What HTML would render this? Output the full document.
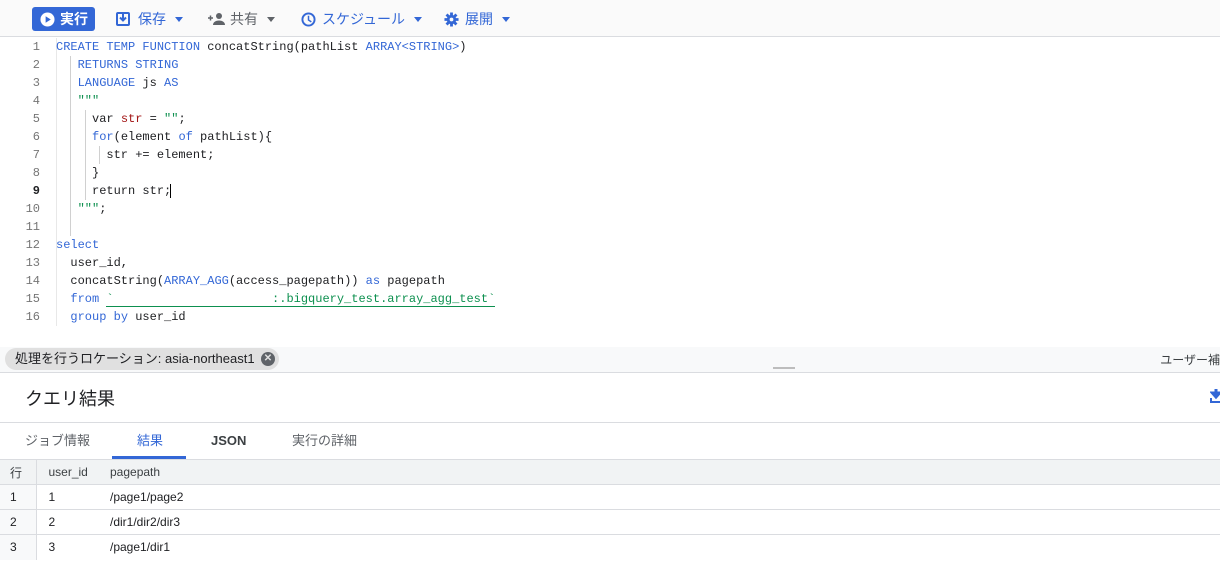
<!DOCTYPE html>
<html><head><meta charset="utf-8"><style>
*{margin:0;padding:0;box-sizing:border-box}
body{width:1220px;height:565px;overflow:hidden;background:#fff;font-family:"Liberation Sans","Noto Sans CJK JP",sans-serif;color:#202124;position:relative}
.tb{position:absolute;top:0;left:0;width:1220px;height:37px;background:#fafafa;border-bottom:1px solid #dadce0}
.btn{position:absolute;top:7px;height:24px;display:flex;align-items:center;font-size:14px;line-height:24px;color:#3c4043}
.run{left:32px;width:63px;background:#3367d6;color:#fff;border-radius:3px;padding-left:8px;font-weight:bold}
.tri{display:inline-block;width:0;height:0;border-left:4.5px solid transparent;border-right:4.5px solid transparent;border-top:5px solid #3c4043;margin-left:9px}
.ed{position:absolute;top:38px;left:0;width:1220px;height:308px;font-family:"Liberation Mono",monospace;font-size:12px}
.ln{position:absolute;left:0;width:40px;text-align:right;color:#757575;line-height:18px}
.cd{position:absolute;left:56px;white-space:pre;color:#202124;line-height:18px}
.k{color:#3367d6}.s{color:#0d904f}.v{color:#a31515}
.g{position:absolute;width:1px;background:#d0d0d0}
.loc{position:absolute;top:347px;left:0;width:1220px;height:26px;background:#f8f9fa;border-bottom:1px solid #dadce0}
.chip{position:absolute;left:5px;top:1px;height:22px;background:#e0e0e0;border-radius:11px;font-size:13px;padding:0 0 0 10px;line-height:22px;width:274px}
.x{position:absolute;right:4px;top:4px;width:14px;height:14px;border-radius:50%;background:#5f6368;color:#e0e0e0;font-size:10px;line-height:14px;text-align:center;font-weight:bold}
.tabs{position:absolute;top:422px;left:0;width:1220px;height:37px;border-top:1px solid #dadce0;font-size:13px;color:#5f6368}
.tab{position:absolute;top:9px;line-height:18px}
table{position:absolute;top:459px;left:0;width:1220px;border-collapse:collapse;font-size:12px}
td{height:25px;border-top:1px solid #dadce0;padding-left:12px}
tr.h td{background:#f1f3f4;color:#3c4043}
td.n{width:36px;padding-left:10px;border-right:1px solid #dadce0;background:#f8f9fa}
</style></head><body>
<div class="tb">
<div class="btn run"><svg width="15" height="15" viewBox="0 0 16 16"><circle cx="8" cy="8" r="7.5" fill="#fff"/><path d="M6 4.5v7l5.5-3.5z" fill="#3367d6"/></svg><span style="margin-left:5px">実行</span></div>
<div class="btn" style="left:116px"><svg width="14" height="14" viewBox="0 0 14 14"><rect x="1" y="1" width="12" height="12" rx="1" fill="none" stroke="#3367d6" stroke-width="2"/><path d="M7 2v6M4 5.5l3 3 3-3" stroke="#3367d6" stroke-width="2" fill="none"/></svg><span style="margin-left:8px;color:#3367d6">保存</span><span class="tri" style="border-top-color:#3367d6"></span></div>
<div class="btn" style="left:208px;color:#5f6368"><svg width="18" height="14" viewBox="0 0 18 14"><path d="M0 6h5M2.5 3.5v5" stroke="#5f6368" stroke-width="1.5"/><circle cx="11" cy="4" r="3" fill="#5f6368"/><path d="M5 13c0-3 3-4.5 6-4.5s6 1.5 6 4.5z" fill="#5f6368"/></svg><span style="margin-left:4px">共有</span><span class="tri" style="border-top-color:#5f6368"></span></div>
<div class="btn" style="left:301px;color:#3367d6"><svg width="15" height="15" viewBox="0 0 16 16"><circle cx="8" cy="8" r="6.5" fill="none" stroke="#3367d6" stroke-width="2"/><path d="M8 4v4.5l3 2" stroke="#3367d6" stroke-width="1.6" fill="none"/></svg><span style="margin-left:6px">スケジュール</span><span class="tri" style="border-top-color:#3367d6"></span></div>
<div class="btn" style="left:444px;color:#3367d6"><svg width="15" height="15" viewBox="0 0 16 16"><circle cx="8" cy="8" r="5" fill="#3367d6"/><g stroke="#3367d6" stroke-width="3"><path d="M8 0.5v15M0.5 8h15M2.7 2.7l10.6 10.6M13.3 2.7L2.7 13.3"/></g><circle cx="8" cy="8" r="2" fill="#fafafa"/></svg><span style="margin-left:6px">展開</span><span class="tri" style="border-top-color:#3367d6"></span></div>
</div>
<div class="ed">
<div class="g" style="left:70px;top:18px;height:180px"></div>
<div class="g" style="left:85px;top:72px;height:90px"></div>
<div class="g" style="left:99px;top:108px;height:18px"></div>
<div class="g" style="left:56px;top:0;height:288px;background:#e8e8e8"></div>
</div>
<div class="ed" id="code"></div>
<script>
var L=[
'<span class="k">CREATE TEMP FUNCTION</span> concatString(pathList <span class="k">ARRAY&lt;STRING&gt;</span>)',
'   <span class="k">RETURNS STRING</span>',
'   <span class="k">LANGUAGE</span> js <span class="k">AS</span>',
'   <span class="s">"""</span>',
'     var <span class="v">str</span> = <span class="s">""</span>;',
'     <span class="k">for</span>(element <span class="k">of</span> pathList){',
'       str += element;',
'     }',
'     return str;<span style="border-left:1.5px solid #000;margin-left:-1px">&#8203;</span>',
'   <span class="s">"""</span>;',
'',
'<span class="k">select</span>',
'  user_id,',
'  concatString(<span class="k">ARRAY_AGG</span>(access_pagepath)) <span class="k">as</span> pagepath',
'  <span class="k">from</span> <span class="s" style="border-bottom:1px solid #0d904f">`                      :.bigquery_test.array_agg_test`</span>',
'  <span class="k">group by</span> user_id'];
var h='';for(var i=0;i<L.length;i++){var t=i*18;h+='<div class="ln" style="top:'+t+'px;'+(i==8?'color:#202124;font-weight:bold':'')+'">'+(i+1)+'</div><div class="cd" style="top:'+t+'px">'+L[i]+'</div>';}
document.getElementById('code').innerHTML=h;
</script>
<div class="loc"><div class="chip">処理を行うロケーション: asia-northeast1<div class="x">✕</div></div>
<div style="position:absolute;right:0;top:4px;font-size:12px;color:#3c4043">ユーザー補</div>
<div style="position:absolute;left:773px;top:20px;width:22px;height:2px;background:#bdbdbd"></div></div>
<div style="position:absolute;top:385px;left:25px;font-size:18px">クエリ結果</div>
<svg style="position:absolute;left:1210px;top:389px" width="12" height="14" viewBox="0 0 12 14"><path d="M6 0v7M2.5 4l3.5 4 3.5-4z" stroke="#3367d6" stroke-width="3" fill="#3367d6"/><path d="M1 9v4h11" stroke="#3367d6" stroke-width="2" fill="none"/></svg>
<div class="tabs">
<div class="tab" style="left:25px">ジョブ情報</div>
<div class="tab" style="left:137px;color:#3367d6">結果</div>
<div class="tab" style="left:211px;font-weight:bold;color:#3c4043">JSON</div>
<div class="tab" style="left:292px">実行の詳細</div>
<div style="position:absolute;left:112px;top:33px;width:74px;height:3px;background:#3367d6"></div>
</div>
<table>
<tr class="h"><td class="n" style="background:#f1f3f4">行</td><td style="width:62px">user_id</td><td>pagepath</td></tr>
<tr><td class="n">1</td><td>1</td><td>/page1/page2</td></tr>
<tr><td class="n">2</td><td>2</td><td>/dir1/dir2/dir3</td></tr>
<tr><td class="n">3</td><td>3</td><td>/page1/dir1</td></tr>
</table>
</body></html>
